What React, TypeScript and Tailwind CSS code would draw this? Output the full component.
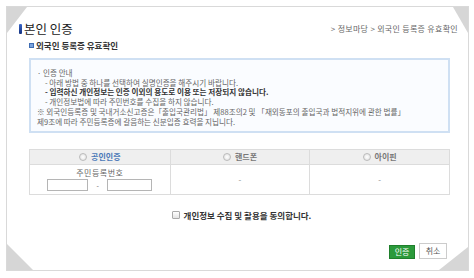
const kr = { fontFamily: '"Noto Sans CJK KR", "Noto Sans", sans-serif' }

function Radio() {
  return (
    <span className="inline-block w-[8px] h-[8px] rounded-full border border-[#bbb] bg-[radial-gradient(circle,#fff_0%,#ddd_100%)] mr-[4px] align-middle" />
  )
}

export default function App() {
  return (
    <div className="w-[474px] h-[278px] bg-white pt-[6px] pl-[6px]" style={kr}>
      <div className="relative w-[463px] h-[265px] border border-[#d9d9d9] bg-white">
        {/* corner folds */}
        <div className="absolute z-10 left-0 top-0 w-[20px] h-[26px] bg-[#d6d6d6] [clip-path:polygon(0_0,100%_0,0_100%)]" />
        <div className="absolute z-10 right-0 top-0 w-[15px] h-[26px] bg-[#d6d6d6] [clip-path:polygon(0_0,100%_0,100%_100%)]" />
        <div className="absolute z-10 left-0 bottom-0 w-[26px] h-[26px] bg-[#d6d6d6] [clip-path:polygon(0_0,0_100%,100%_100%)]" />
        <div className="absolute z-10 right-0 bottom-0 w-[29px] h-[23px] bg-[#d6d6d6] [clip-path:polygon(100%_0,100%_100%,0_100%)]" />

        {/* Header */}
        <div className="flex items-center justify-between ml-[12px] mr-[10px] mt-[16px] h-[12px]">
          <div className="flex items-center gap-[2px]">
            <span className="w-[3px] h-[10px] rounded-[1px] bg-[linear-gradient(#3a66c8,#14327f)]" />
            <span className="text-[12.5px] leading-[12px] text-[#222]">본인 인증</span>
          </div>
          <span className="text-[8px] leading-[10px] text-[#666] tracking-[0.3px]">&gt; 정보마당 &gt; 외국인 등록증 유효확인</span>
        </div>

        {/* Section heading */}
        <div className="flex items-center gap-[2px] ml-[22px] mt-[5px] h-[10px]">
          <span className="w-[5px] h-[5px] bg-[#7aa3dd] border border-[#3f6db3]" />
          <span className="text-[8.5px] leading-[10px] font-bold text-[#333]">외국인 등록증 유효확인</span>
        </div>

        {/* Info box */}
        <div className="ml-[22px] mr-[18px] mt-[8px] h-[75px] border-2 border-[#cfe0f3] bg-[#fafcff] pl-[6px] pt-[8px] text-[7.6px] leading-[9.7px] text-[#666]">
          <div>· 인증 안내</div>
          <div className="pl-[8px]">- 아래 방법 중 하나를 선택하여 실명인증을 해주시기 바랍니다.</div>
          <div className="pl-[8px] font-bold text-[#333]">- 입력하신 개인정보는 인증 이외의 용도로 이용 또는 저장되지 않습니다.</div>
          <div className="pl-[8px]">- 개인정보법에 따라 주민번호를 수집을 하지 않습니다.</div>
          <div className="whitespace-nowrap">※ 외국인등록증 및 국내거소신고증은「출입국관리법」 제88조의2 및 「재외동포의 출입국과 법적지위에 관한 법률」</div>
          <div>제9조에 따라 주민등록증에 갈음하는 신분입증 효력을 지닙니다.</div>
        </div>

        {/* Table */}
        <div className="ml-[22px] mr-[18px] mt-[16px] border border-[#dcdcdc] grid grid-cols-3 text-[8px]">
          <div className="h-[15px] bg-[#efefef] border-b border-[#dcdcdc] flex items-center justify-center font-bold text-[#4a78b8]">
            <Radio />공인인증
          </div>
          <div className="h-[15px] bg-[#efefef] border-b border-l border-[#dcdcdc] flex items-center justify-center font-bold text-[#777]">
            <Radio />핸드폰
          </div>
          <div className="h-[15px] bg-[#efefef] border-b border-l border-[#dcdcdc] flex items-center justify-center font-bold text-[#777]">
            <Radio />아이핀
          </div>
          <div className="h-[29px] flex flex-col items-center pt-[2px] text-[#666]">
            <span className="leading-[11px] tracking-[0.5px]">주민등록번호</span>
            <div className="flex items-center mt-[1px]">
              <span className="w-[41px] h-[12px] border border-[#b5b5b5] bg-white" />
              <span className="w-[19px] text-center text-[7px]">-</span>
              <span className="w-[45px] h-[12px] border border-[#b5b5b5] bg-white" />
            </div>
          </div>
          <div className="h-[29px] border-l border-[#dcdcdc] flex items-center justify-center text-[#888]">-</div>
          <div className="h-[29px] border-l border-[#dcdcdc] flex items-center justify-center text-[#888]">-</div>
        </div>

        {/* Agreement */}
        <div className="flex items-center justify-center mt-[14px] pl-[8px]">
          <span className="w-[8px] h-[8px] border border-[#aaa] rounded-[1px] bg-[linear-gradient(#fff,#e4e4e4)] mr-[4px]" />
          <span className="text-[8.5px] font-bold text-[#333]">개인정보 수집 및 활용을 동의합니다.</span>
        </div>

        {/* Buttons */}
        <div className="flex justify-end gap-[4px] pr-[21px] mt-[21px]">
          <button className="w-[26px] h-[14px] mt-[2px] bg-[#2b9a3b] border border-[#1f7f2c] text-white text-[8px] leading-[12px]">인증</button>
          <button className="w-[28px] h-[16px] bg-white border border-[#ccc] text-[#555] text-[8px] leading-[14px]">취소</button>
        </div>
      </div>
    </div>
  )
}
